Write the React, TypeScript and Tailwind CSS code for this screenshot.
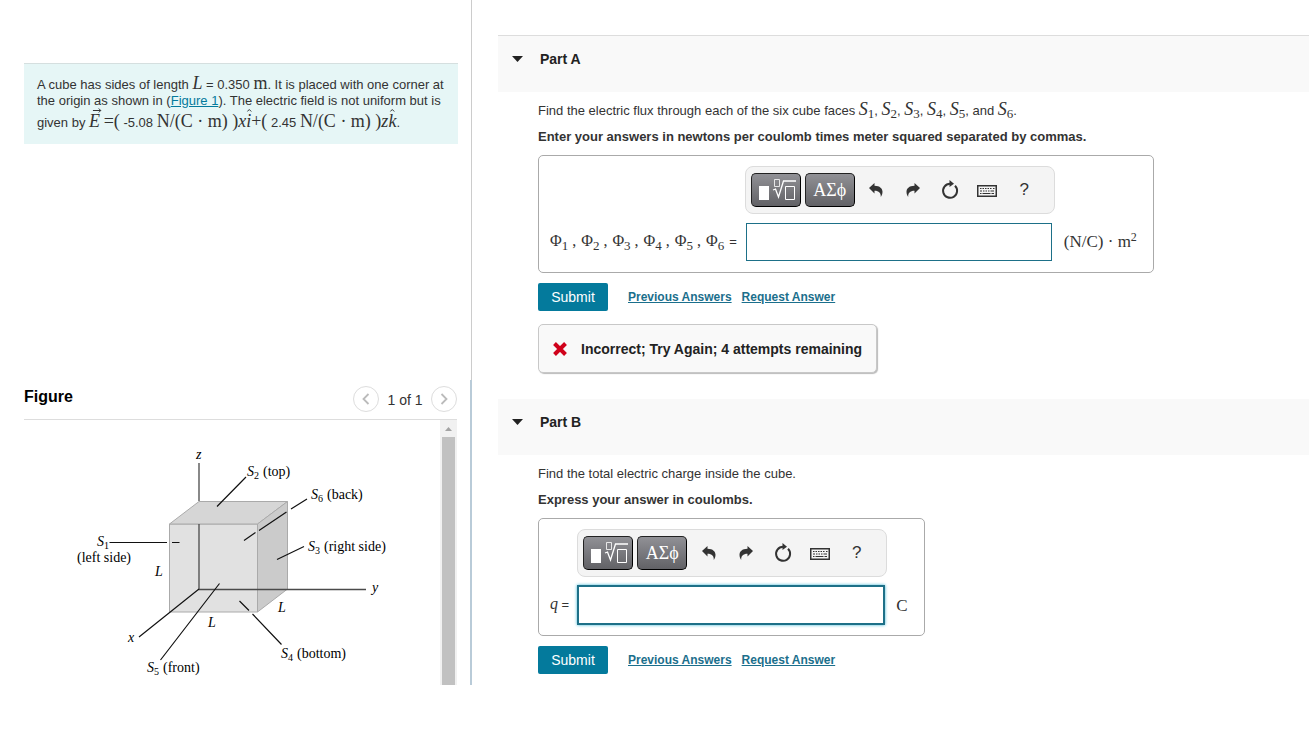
import React, { useState } from "react";

interface SymProps {
  name: string;
  sub?: string;
}

// A math symbol with an optional subscript
function Sym({ name, sub }: SymProps) {
  return (
    <span className="font-['Liberation_Serif',serif] text-[18px] leading-none">
      <i>{name}</i>
      {sub && <sub className="text-[13px]">{sub}</sub>}
    </span>
  );
}

interface VectorProps {
  name: string;
  accent: "arrow" | "hat";
}

function Vector({ name, accent }: VectorProps) {
  return (
    <span className="relative inline-block font-['Liberation_Serif',serif] text-[18px] leading-none italic">
      {name}
      <svg className="absolute -top-1 left-1/2 -translate-x-1/4" width="9" height="5" fill="none" stroke="currentColor">
        {accent === "arrow" ? <path d="M0 2.5h8M6 .5l2 2-2 2" /> : <path d="M.5 3.500l2-2 2 2" />}
      </svg>
    </span>
  );
}

function Units({ children }: { children: React.ReactNode }) {
  return <span className="font-['Liberation_Serif',serif] text-[18px] leading-none">{children}</span>;
}

const iconButton = "flex h-9 w-[37px] items-center justify-center text-[#333] cursor-pointer";
const paletteButton =
  "flex h-[34px] w-[50px] items-center justify-center rounded-[5px] border border-[#222] border-r-black border-b-black bg-linear-to-b from-[#919196] to-[#626266] text-white cursor-pointer";

function Toolbar() {
  return (
    <div className="flex h-12 w-[310px] items-center rounded-lg border border-[#dcdcdc] bg-[#f4f4f4] pl-[5px]">
      <button type="button" aria-label="Templates" className={paletteButton}>
        <svg width="40" height="26" viewBox="0 0 40 26" fill="none" stroke="#fff">
          <path d="M3 9h10v14H3z" fill="#fff" stroke="none" />
          <path d="M18.500 2.500h5v7h-5z" strokeOpacity=".8" />
          <path d="M17 13l2.500-1 3 8 5-16H40" strokeWidth="1.300" />
          <path d="M29.500 9.500h9v13h-9z" />
        </svg>
      </button>
      <button
        type="button"
        aria-label="Symbols"
        className={`${paletteButton} ml-1 font-['Liberation_Serif',serif] text-[18px] leading-none`}
      >
        ΑΣϕ
      </button>
      <div className="ml-[3px] flex">
        <button type="button" aria-label="Undo" className={iconButton}>
          <svg width="16" height="16" viewBox="0 0 16 16" fill="currentColor">
            <path d="M1 6L6.500 1v2.800c5.500 0 8 3 8 6 0 2.200-.6 3.700-1.700 5.200.3-4-1.800-6.300-6.300-6.300V11.500z" />
          </svg>
        </button>
        <button type="button" aria-label="Redo" className={iconButton}>
          <svg width="16" height="16" viewBox="0 0 16 16" fill="currentColor">
            <path d="M15 6L9.500 1v2.800c-5.500 0-8 3-8 6 0 2.200.6 3.700 1.700 5.200-.3-4 1.800-6.300 6.300-6.300V11.500z" />
          </svg>
        </button>
        <button type="button" aria-label="Reset" className={iconButton}>
          <svg width="18" height="20" viewBox="0 0 18 20">
            <path d="M14 5.800A7 7 0 1 1 9 3.800" fill="none" stroke="currentColor" strokeWidth="2" />
            <path d="M8.500 0l4.500 3.700-4.500 3.300z" fill="currentColor" />
          </svg>
        </button>
        <button type="button" aria-label="Keyboard shortcuts" className={iconButton}>
          <svg width="20" height="16" viewBox="0 0 20 16">
            <path d="M.75 3.750h18.500v10.500H.75z" fill="none" stroke="currentColor" strokeWidth="1.500" />
            <path
              d="M3 6.500h1.500m1 0h1.500m1 0h1.500m1 0h1.500m1 0h1.500m1.500 0h1.500M3 9h2m1 0h1.500m1 0h1.500m1 0h1.500m1 0h3.500M3 11.500h1.500m1 0h8m1 0h2.500"
              fill="none"
              stroke="currentColor"
              strokeWidth="1.200"
            />
          </svg>
        </button>
        <button type="button" aria-label="Help" className={`${iconButton} text-[17px]`}>
          ?
        </button>
      </div>
    </div>
  );
}

interface AnswerBoxProps {
  id: string;
  label: React.ReactNode;
  unit: React.ReactNode;
  active?: boolean;
}

function AnswerBox({ id, label, unit, active }: AnswerBoxProps) {
  return (
    <div className="inline-grid grid-cols-[auto_311px_auto] items-center gap-x-2 gap-y-2 rounded-[5px] border border-[#aaa] py-[10px] pr-4 pl-[11px]">
      <div className="col-start-2">
        <Toolbar />
      </div>
      <label htmlFor={id} className="col-start-1 whitespace-nowrap">
        {label}
      </label>
      <div className="flex h-10 items-center">
        <input
          id={id}
          type="text"
          className={
            active
              ? "h-10 w-[308px] border-2 border-[#1d7088] bg-white px-2 outline-none shadow-[0_0_3px_#3bb5d6]"
              : "ml-px h-[38px] w-[306px] border border-[#1d7088] bg-white px-2 outline-none"
          }
        />
      </div>
      <span className="font-['Liberation_Serif',serif] text-[17px] leading-none whitespace-nowrap">{unit}</span>
    </div>
  );
}

function Actions() {
  return (
    <div className="mt-[10px] flex items-center">
      <button type="button" className="h-7 w-[70px] rounded-[2px] bg-[#047a9c] text-sm text-white cursor-pointer">
        Submit
      </button>
      <a href="#previous" className="ml-5 text-xs font-bold text-[#1b6f8c] underline">
        Previous Answers
      </a>
      <a href="#request" className="ml-[10px] text-xs font-bold text-[#1b6f8c] underline">
        Request Answer
      </a>
    </div>
  );
}

function Part({ title, children }: { title: string; children: React.ReactNode }) {
  const [open, setOpen] = useState(true);

  return (
    <section>
      <h2 className="flex h-14 bg-[#f9f9f9] pt-[11px]">
        <button
          type="button"
          aria-expanded={open}
          onClick={() => setOpen(!open)}
          className="flex h-6 items-center gap-[17px] pl-[14px] text-sm font-bold text-[#222] cursor-pointer"
        >
          <svg width="11" height="6" viewBox="0 0 11 6" className={open ? "" : "-rotate-90"}>
            <path d="M0 0h11L5.500 6z" fill="#222" />
          </svg>
          {title}
        </button>
      </h2>
      {open && <div className="pr-4 pl-10">{children}</div>}
    </section>
  );
}

interface FaceLabel {
  x: number;
  y: number;
  sub: string;
  text: string;
}

const faceLabels: FaceLabel[] = [
  { x: 73, y: 126, sub: "1", text: "" },
  { x: 223, y: 56, sub: "2", text: "(top)" },
  { x: 284, y: 131, sub: "3", text: "(right side)" },
  { x: 257, y: 238, sub: "4", text: "(bottom)" },
  { x: 123, y: 252, sub: "5", text: "(front)" },
  { x: 287, y: 79, sub: "6", text: "(back)" },
];

const axisLabels = [
  { x: 172, y: 39, text: "z" },
  { x: 348, y: 172, text: "y" },
  { x: 104, y: 222, text: "x" },
  { x: 131, y: 156, text: "L" },
  { x: 184, y: 207, text: "L" },
  { x: 254, y: 192, text: "L" },
];

function CubeFigure() {
  return (
    <svg
      width="416"
      height="265"
      viewBox="0 0 416 265"
      role="img"
      aria-label="Cube with one corner at the origin"
      className="shrink-0 font-['Liberation_Serif',serif] text-[14px]"
    >
      <g stroke="#aaa">
        <path d="M145.500 104h88v88h-88z" fill="#e1e1e1" />
        <path d="M145.500 104L175 81.500h88.500L233.500 104z" fill="#d6d6d6" />
        <path d="M233.500 104l30-22.500V169l-30 23z" fill="#cbcbcb" />
      </g>
      <path d="M175 43v38M175 104v65.500h167" fill="none" stroke="#4a4a4a" strokeWidth="1.300" />
      <path
        d="M175 169l-60 48M222 57l-29 29.500M283 79l-16 10M262.500 92L235 110.500M231.500 112.500l-11.500 8M85.500 122.500H143M148 122.500h7.500M280 126.500l-27 13M215.500 181l9.500 9.500M228.500 194l29 30.500M195.500 163.500l-59 76.500"
        fill="none"
        stroke="#111"
        strokeWidth="1.200"
      />
      {faceLabels.map((face) => (
        <text key={face.sub} x={face.x} y={face.y}>
          <tspan fontStyle="italic">S</tspan>
          <tspan dy="3" fontSize="10">
            {face.sub}
          </tspan>
          {face.text && (
            <tspan dy="-3" dx="4">
              {face.text}
            </tspan>
          )}
        </text>
      ))}
      <text x="53" y="142">
        (left side)
      </text>
      {axisLabels.map((axis, idx) => (
        <text key={idx} x={axis.x} y={axis.y} fontStyle="italic">
          {axis.text}
        </text>
      ))}
    </svg>
  );
}

const pagerButton =
  "flex h-[26px] w-[26px] items-center justify-center rounded-full border border-[#ddd] text-[#bbb] cursor-pointer";

export default function App() {
  return (
    <div className="flex items-start overflow-x-hidden bg-white font-['Liberation_Sans',Arial,sans-serif] text-[13px] text-[#333]">
      <aside className="w-[36%] min-w-[472px] shrink-0">
        <div className="h-[380px] border-r border-[#ccc] pt-[63px] pr-[13px] pl-6">
          <p className="border-t border-[#d5dfdf] bg-[#e6f6f6] pt-[10px] pb-[11px] pl-[13px] leading-4 whitespace-nowrap">
            A cube has sides of length <Sym name="L" /> = 0.350 <Units>m</Units>. It is placed with one corner at
            <br />
            the origin as shown in (
            <a href="#figure" className="text-[#047a9c] underline">
              Figure 1
            </a>
            ). The electric field is not uniform but is
            <br />
            <span className="inline-block pt-[3px] leading-5">
              given by <Vector name="E" accent="arrow" /> <Units>=(</Units> -5.08 <Units>N/(C · m) )</Units>
              <Sym name="x" />
              <Vector name="i" accent="hat" />
              <Units>+(</Units> 2.45 <Units>N/(C · m) )</Units>
              <Sym name="z" />
              <Vector name="k" accent="hat" />.
            </span>
          </p>
        </div>

        <div id="figure" className="border-r-2 border-[#b9cbd8] pr-[13px] pl-6">
          <div className="flex h-10 items-center justify-between border-b border-[#ddd] pb-[2px]">
            <h2 className="pb-1 text-base font-bold text-black">Figure</h2>
            <div className="flex items-center text-sm">
              <button type="button" aria-label="Previous figure" className={pagerButton}>
                <svg width="8" height="12" fill="none" stroke="currentColor" strokeWidth="1.800">
                  <path d="M6.500 1L1.500 6l5 5" />
                </svg>
              </button>
              <span className="w-[52px] pt-[2px] text-center">1 of 1</span>
              <button type="button" aria-label="Next figure" className={pagerButton}>
                <svg width="8" height="12" fill="none" stroke="currentColor" strokeWidth="1.800">
                  <path d="M1.500 1l5 5-5 5" />
                </svg>
              </button>
            </div>
          </div>
          <div className="flex justify-between text-black">
            <CubeFigure />
            <div className="flex w-[17px] flex-col items-center bg-[#f1f1f1]">
              <div className="flex h-[17px] items-center">
                <svg width="7" height="4" fill="#a3a3a3">
                  <path d="M0 4L3.500 0 7 4z" />
                </svg>
              </div>
              <div className="w-[13px] flex-1 bg-[#c1c1c1]" />
            </div>
          </div>
        </div>
      </aside>

      <main className="min-w-0 flex-1 pt-[35px] pl-[26px]">
        <div className="border-t border-[#ddd]">
          <Part title="Part A">
            <p className="pt-2 leading-5">
              Find the electric flux through each of the six cube faces <Sym name="S" sub="1" />, <Sym name="S" sub="2" />,{" "}
              <Sym name="S" sub="3" />, <Sym name="S" sub="4" />, <Sym name="S" sub="5" />, and <Sym name="S" sub="6" />.
            </p>
            <p className="pt-[6px] pb-2 leading-5 font-bold">
              Enter your answers in newtons per coulomb times meter squared separated by commas.
            </p>
            <AnswerBox
              id="flux"
              label={
                <span className="flex items-baseline gap-[5px]">
                  {["1", "2", "3", "4", "5", "6"].map((n) => (
                    <span key={n} className="font-['Liberation_Serif',serif] text-[16px] leading-none">
                      Φ<sub className="text-[13px]">{n}</sub>
                      {n !== "6" && " ,"}
                    </span>
                  ))}
                  =
                </span>
              }
              unit={
                <>
                  (N/C) · m<sup className="text-xs">2</sup>
                </>
              }
            />
            <Actions />
            <div className="mt-[13px] inline-flex h-[49px] items-center gap-[14px] rounded-[5px] border border-[#c8c8c8] bg-[#f9f9f9] px-[14px] text-sm font-bold text-[#222] shadow-[1px_1px_1px_#bbb]">
              <svg width="14" height="14" viewBox="0 0 14 14" fill="none" stroke="#d0021b" strokeWidth="4">
                <path d="M1.500 1.500l11 11M12.500 1.500l-11 11" />
              </svg>
              Incorrect; Try Again; 4 attempts remaining
            </div>
          </Part>
        </div>

        <div className="pt-[26px]">
          <Part title="Part B">
            <p className="pt-[9px] leading-5">Find the total electric charge inside the cube.</p>
            <p className="pt-[6px] pb-2 leading-5 font-bold">Express your answer in coulombs.</p>
            <AnswerBox
              id="charge"
              active
              label={
                <>
                  <i className="font-['Liberation_Serif',serif] text-[16px] leading-none">q</i> =
                </>
              }
              unit="C"
            />
            <Actions />
          </Part>
        </div>
      </main>
    </div>
  );
}
